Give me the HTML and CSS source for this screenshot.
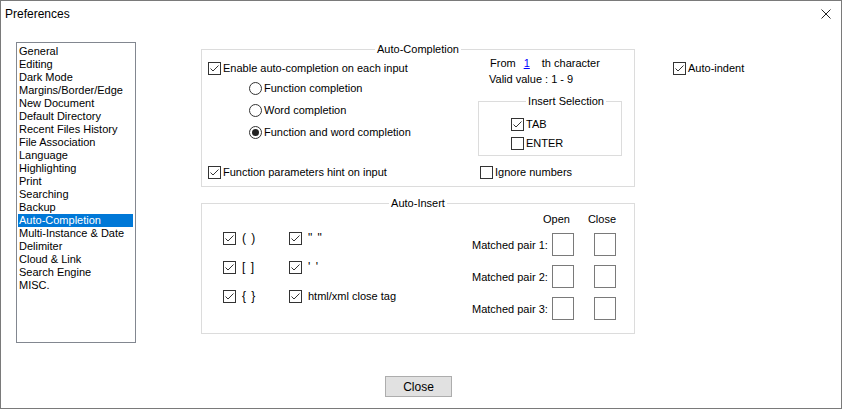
FILE: index.html
```html
<!DOCTYPE html>
<html lang="en">

<head>
    <meta charset="UTF-8">
    <title>Preferences</title>
    <link rel="stylesheet" href="styles.css">
</head>

<body>
    <div class="window">
        <div class="titlebar">
            <span class="title">Preferences</span>
            <svg class="close-x" width="10" height="10" viewBox="0 0 10 10">
                <path d="M0.5 0.5 L9.5 9.5 M9.5 0.5 L0.5 9.5" stroke="#222" stroke-width="1" fill="none" />
            </svg>
        </div>

        <div class="body">
            <ul class="cat-list">
                <li>General</li>
                <li>Editing</li>
                <li>Dark Mode</li>
                <li>Margins/Border/Edge</li>
                <li>New Document</li>
                <li>Default Directory</li>
                <li>Recent Files History</li>
                <li>File Association</li>
                <li>Language</li>
                <li>Highlighting</li>
                <li>Print</li>
                <li>Searching</li>
                <li>Backup</li>
                <li class="selected">Auto-Completion</li>
                <li>Multi-Instance &amp; Date</li>
                <li>Delimiter</li>
                <li>Cloud &amp; Link</li>
                <li>Search Engine</li>
                <li>MISC.</li>
            </ul>

            <div class="panel">
                <div class="groups">
                    <fieldset class="group completion">
                        <legend>Auto-Completion</legend>
                        <div class="completion-left">
                            <div class="check enable">
                                <span class="box"><svg width="11" height="11" viewBox="0 0 11 11"><path d="M1.5 5.5 L4 8 L9.5 2.5" /></svg></span>
                                Enable auto-completion on each input
                            </div>
                            <div class="radios">
                                <div class="check"><span class="radio"></span>Function completion</div>
                                <div class="check"><span class="radio"></span>Word completion</div>
                                <div class="check"><span class="radio on"></span>Function and word completion</div>
                            </div>
                            <div class="check params">
                                <span class="box"><svg width="11" height="11" viewBox="0 0 11 11"><path d="M1.5 5.5 L4 8 L9.5 2.5" /></svg></span>
                                Function parameters hint on input
                            </div>
                        </div>
                        <div class="completion-right">
                            <div class="from-line">
                                <span>From</span>
                                <span class="num-link">1</span>
                                <span>th character</span>
                            </div>
                            <div class="valid-line">Valid value : 1 - 9</div>
                            <fieldset class="group insert-sel">
                                <legend>Insert Selection</legend>
                                <div class="check">
                                    <span class="box"><svg width="11" height="11" viewBox="0 0 11 11"><path d="M1.5 5.5 L4 8 L9.5 2.5" /></svg></span>
                                    TAB
                                </div>
                                <div class="check enter"><span class="box"></span>ENTER</div>
                            </fieldset>
                            <div class="check ignore"><span class="box"></span>Ignore numbers</div>
                        </div>
                    </fieldset>

                    <fieldset class="group insert">
                        <legend>Auto-Insert</legend>
                        <div class="pair-checks">
                            <div class="check wide"><span class="box"><svg width="11" height="11" viewBox="0 0 11 11"><path d="M1.5 5.5 L4 8 L9.5 2.5" /></svg></span><span class="bracket">( )</span></div>
                            <div class="check wide"><span class="box"><svg width="11" height="11" viewBox="0 0 11 11"><path d="M1.5 5.5 L4 8 L9.5 2.5" /></svg></span><span class="bracket">" "</span></div>
                            <div class="check wide"><span class="box"><svg width="11" height="11" viewBox="0 0 11 11"><path d="M1.5 5.5 L4 8 L9.5 2.5" /></svg></span><span class="bracket">[ ]</span></div>
                            <div class="check wide"><span class="box"><svg width="11" height="11" viewBox="0 0 11 11"><path d="M1.5 5.5 L4 8 L9.5 2.5" /></svg></span><span class="bracket">' '</span></div>
                            <div class="check wide"><span class="box"><svg width="11" height="11" viewBox="0 0 11 11"><path d="M1.5 5.5 L4 8 L9.5 2.5" /></svg></span><span class="bracket">{ }</span></div>
                            <div class="check wide"><span class="box"><svg width="11" height="11" viewBox="0 0 11 11"><path d="M1.5 5.5 L4 8 L9.5 2.5" /></svg></span>html/xml close tag</div>
                        </div>
                        <div class="matched">
                            <div class="matched-head">
                                <span class="head-open">Open</span>
                                <span class="head-close">Close</span>
                            </div>
                            <div class="matched-row">
                                <span class="pair-label">Matched pair 1:</span>
                                <span class="char-box"></span>
                                <span class="char-box"></span>
                            </div>
                            <div class="matched-row">
                                <span class="pair-label">Matched pair 2:</span>
                                <span class="char-box"></span>
                                <span class="char-box"></span>
                            </div>
                            <div class="matched-row">
                                <span class="pair-label">Matched pair 3:</span>
                                <span class="char-box"></span>
                                <span class="char-box"></span>
                            </div>
                        </div>
                    </fieldset>
                </div>

                <div class="check auto-indent">
                    <span class="box"><svg width="11" height="11" viewBox="0 0 11 11"><path d="M1.5 5.5 L4 8 L9.5 2.5" /></svg></span>
                    Auto-indent
                </div>
            </div>
        </div>

        <div class="footer">
            <button class="btn">Close</button>
        </div>
    </div>
</body>

</html>
```

FILE: styles.css
```css
body {
    margin: 0;
    background-color: #ffffff;
    font-family: "Liberation Sans", Arial, sans-serif;
    font-size: 11px;
    color: #000000;
}

.window {
    width: 842px;
    height: 409px;
    border: 1px solid #7a7a7a;
    box-sizing: border-box;
    background-color: #ffffff;
}

.titlebar {
    display: flex;
    align-items: center;
    justify-content: space-between;
    height: 25px;
    padding: 0 10px 0 4px;
}

.title {
    font-size: 12px;
}

.close-x {
    display: block;
    margin-top: 1px;
}

.body {
    display: flex;
    height: 350px;
    padding: 16px 0 0 15px;
    box-sizing: border-box;
}

.cat-list {
    list-style: none;
    margin: 0;
    padding: 2px 1px 1px 1px;
    width: 120px;
    height: 301px;
    border: 1px solid #828790;
    box-sizing: border-box;
}

.cat-list li {
    line-height: 13px;
    height: 13px;
    padding-left: 1px;
    margin-right: 1px;
    white-space: nowrap;
}

.cat-list li.selected {
    background-color: #0078d7;
    color: #ffffff;
}

.panel {
    display: flex;
    margin-left: 65px;
    margin-top: 1px;
}

.groups {
    width: 434px;
}

.group {
    margin: 0;
    padding: 0;
    border: 1px solid #dcdcdc;
    min-width: 0;
}

.group legend {
    margin: 0 auto;
    padding: 0 2px;
    line-height: 13px;
}

/* checkboxes and radios */
.check {
    display: flex;
    align-items: center;
    height: 13px;
    line-height: 13px;
    gap: 2px;
    white-space: nowrap;
}

.box {
    display: flex;
    align-items: center;
    justify-content: center;
    width: 13px;
    height: 13px;
    flex: none;
    border: 1px solid #333333;
    box-sizing: border-box;
    background-color: #ffffff;
}

.box path {
    fill: none;
    stroke: #333333;
    stroke-width: 1;
}

.radio {
    display: flex;
    align-items: center;
    justify-content: center;
    width: 13px;
    height: 13px;
    flex: none;
    border: 1px solid #333333;
    border-radius: 50%;
    box-sizing: border-box;
}

.radio.on::after {
    content: "";
    width: 7px;
    height: 7px;
    border-radius: 50%;
    background-color: #222222;
}

/* auto-completion */
.completion {
    display: flex;
    padding-bottom: 7px;
}

.completion-left {
    width: 270px;
    padding-left: 6px;
}

.enable {
    margin-top: 6px;
}

.radios {
    padding-left: 41px;
    margin-top: 7px;
}

.radios .check + .check {
    margin-top: 9px;
}

.params {
    margin-top: 27px;
}

.completion-right {
    width: 144px;
}

.from-line {
    display: flex;
    line-height: 13px;
    margin-top: 1px;
    padding-left: 12px;
}

.num-link {
    color: #0000ff;
    text-decoration: underline;
    margin-left: 8px;
    margin-right: 12px;
}

.valid-line {
    line-height: 13px;
    margin-top: 3px;
    padding-left: 11px;
}

.insert-sel {
    margin-top: 9px;
    padding: 10px 0 5px 32px;
}

.insert-sel .enter {
    margin-top: 6px;
}

.ignore {
    margin-top: 10px;
    padding-left: 2px;
}

/* auto-insert */
.insert {
    display: flex;
    margin-top: 10px;
    padding-bottom: 13px;
}

.pair-checks {
    display: grid;
    grid-template-columns: 66px auto;
    grid-template-rows: 13px 13px 13px;
    row-gap: 16px;
    align-content: start;
    width: 249px;
    padding-left: 21px;
    margin-top: 22px;
}

.pair-checks .wide {
    gap: 6px;
}

.bracket {
    font-size: 12px;
    letter-spacing: 1px;
}

.matched {
    padding-top: 3px;
}

.matched-head {
    display: flex;
    line-height: 13px;
    height: 13px;
    padding-left: 71px;
}

.head-close {
    margin-left: 18px;
}

.matched-row {
    display: flex;
    align-items: center;
    margin-top: 9px;
}

.matched-head + .matched-row {
    margin-top: 7px;
}

.pair-label {
    width: 80px;
    white-space: nowrap;
}

.char-box {
    width: 22px;
    height: 23px;
    border: 1px solid #7a7a7a;
    box-sizing: border-box;
}

.char-box + .char-box {
    margin-left: 20px;
}

.auto-indent {
    margin-left: 38px;
    margin-top: 19px;
}

/* footer */
.footer {
    display: flex;
    padding-left: 384px;
}

.btn {
    width: 67px;
    height: 21px;
    padding: 0;
    background-color: #e1e1e1;
    border: 1px solid #adadad;
    font-family: "Liberation Sans", Arial, sans-serif;
    font-size: 12px;
    color: #000000;
}
```
